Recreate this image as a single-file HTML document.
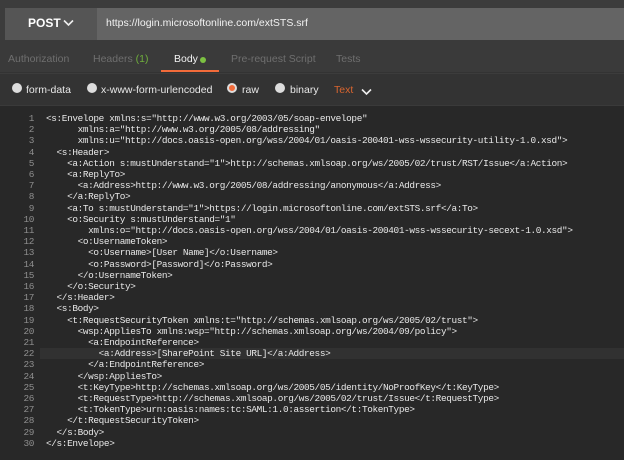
<!DOCTYPE html>
<html><head><meta charset="utf-8"><style>
*{margin:0;padding:0;box-sizing:border-box}
body{width:624px;height:460px;background:#3c3c3c;position:relative;overflow:hidden;font-family:"Liberation Sans",sans-serif}
.abs{position:absolute;white-space:nowrap}
#post{left:5px;top:8px;width:92px;height:32px;background:#555}
#url{left:97px;top:8px;width:527px;height:32px;background:#646464}
#tabs{left:0;top:40px;width:624px;height:33px;background:#3a3a3a;border-bottom:1px solid #333}
#radios{left:0;top:74px;width:624px;height:31px;background:#333}
#editor{left:0;top:105px;width:624px;height:355px;background:#282828;border-top:1px solid #3a3a3a}
.tab{font-size:10.5px;color:#6f6f6f;top:53px}
.rad{top:84px;font-size:10.5px;color:#e8e8e8}
.dot{width:10px;height:10px;border-radius:50%;background:#ddd;top:83px}
#code{position:absolute;left:0;top:113px;font-family:"Liberation Mono",monospace;font-size:9.4px;letter-spacing:-0.36px;line-height:11.2px;color:#e8e8e8}
.ln{position:absolute;left:0;width:34px;text-align:right;color:#8f8f8f}
.tx{position:absolute;left:46px;white-space:pre}
.hl{position:absolute;left:40px;width:584px;height:11.2px;background:#313131}
</style></head><body>
<div class="abs" id="post"></div>
<div class="abs" id="url"></div>
<div class="abs" style="left:28px;top:16px;font-size:12px;font-weight:bold;color:#fff">POST</div>
<svg class="abs" style="left:63px;top:19px" width="11" height="8"><path d="M1 1.5 L5.5 6 L10 1.5" stroke="#eee" stroke-width="1.6" fill="none"/></svg>
<div class="abs" style="left:106px;top:17px;font-size:10.5px;color:#f2f2f2">https://login.microsoftonline.com/extSTS.srf</div>
<div class="abs" id="tabs"></div>
<div class="abs tab" style="left:8px">Authorization</div>
<div class="abs tab" style="left:93px">Headers <span style="color:#6fae3c">(1)</span></div>
<div class="abs tab" style="left:174px;color:#f2f2f2">Body</div>
<div class="abs" style="left:200px;top:57px;width:6px;height:6px;border-radius:50%;background:#7cc142"></div>
<div class="abs tab" style="left:231px">Pre-request Script</div>
<div class="abs tab" style="left:336px">Tests</div>
<div class="abs" style="left:161px;top:70px;width:58px;height:2px;background:#f26b3a"></div>
<div class="abs" id="radios"></div>
<div class="abs dot" style="left:12px"></div>
<div class="abs rad" style="left:26px">form-data</div>
<div class="abs dot" style="left:87px"></div>
<div class="abs rad" style="left:101px">x-www-form-urlencoded</div>
<div class="abs dot" style="left:227px;background:#f26b3a;border:2px solid #ddd"></div>
<div class="abs rad" style="left:242px">raw</div>
<div class="abs dot" style="left:275px"></div>
<div class="abs rad" style="left:290px">binary</div>
<div class="abs rad" style="left:334px;color:#d9652f">Text</div>
<svg class="abs" style="left:361px;top:88px" width="11" height="8"><path d="M1 1.5 L5.5 6 L10 1.5" stroke="#eee" stroke-width="1.6" fill="none"/></svg>
<div class="abs" id="editor"></div>
<div id="code">
<div class="hl" style="top:235.2px"></div>
<div class="ln" style="top:0">1</div><div class="tx" style="top:0">&lt;s:Envelope xmlns:s="http://www.w3.org/2003/05/soap-envelope"</div>
<div class="ln" style="top:11.2px">2</div><div class="tx" style="top:11.2px">      xmlns:a="http://www.w3.org/2005/08/addressing"</div>
<div class="ln" style="top:22.4px">3</div><div class="tx" style="top:22.4px">      xmlns:u="http://docs.oasis-open.org/wss/2004/01/oasis-200401-wss-wssecurity-utility-1.0.xsd"&gt;</div>
<div class="ln" style="top:33.6px">4</div><div class="tx" style="top:33.6px">  &lt;s:Header&gt;</div>
<div class="ln" style="top:44.8px">5</div><div class="tx" style="top:44.8px">    &lt;a:Action s:mustUnderstand="1"&gt;http://schemas.xmlsoap.org/ws/2005/02/trust/RST/Issue&lt;/a:Action&gt;</div>
<div class="ln" style="top:56px">6</div><div class="tx" style="top:56px">    &lt;a:ReplyTo&gt;</div>
<div class="ln" style="top:67.2px">7</div><div class="tx" style="top:67.2px">      &lt;a:Address&gt;http://www.w3.org/2005/08/addressing/anonymous&lt;/a:Address&gt;</div>
<div class="ln" style="top:78.4px">8</div><div class="tx" style="top:78.4px">    &lt;/a:ReplyTo&gt;</div>
<div class="ln" style="top:89.6px">9</div><div class="tx" style="top:89.6px">    &lt;a:To s:mustUnderstand="1"&gt;https://login.microsoftonline.com/extSTS.srf&lt;/a:To&gt;</div>
<div class="ln" style="top:100.8px">10</div><div class="tx" style="top:100.8px">    &lt;o:Security s:mustUnderstand="1"</div>
<div class="ln" style="top:112px">11</div><div class="tx" style="top:112px">        xmlns:o="http://docs.oasis-open.org/wss/2004/01/oasis-200401-wss-wssecurity-secext-1.0.xsd"&gt;</div>
<div class="ln" style="top:123.2px">12</div><div class="tx" style="top:123.2px">      &lt;o:UsernameToken&gt;</div>
<div class="ln" style="top:134.4px">13</div><div class="tx" style="top:134.4px">        &lt;o:Username&gt;[User Name]&lt;/o:Username&gt;</div>
<div class="ln" style="top:145.6px">14</div><div class="tx" style="top:145.6px">        &lt;o:Password&gt;[Password]&lt;/o:Password&gt;</div>
<div class="ln" style="top:156.8px">15</div><div class="tx" style="top:156.8px">      &lt;/o:UsernameToken&gt;</div>
<div class="ln" style="top:168px">16</div><div class="tx" style="top:168px">    &lt;/o:Security&gt;</div>
<div class="ln" style="top:179.2px">17</div><div class="tx" style="top:179.2px">  &lt;/s:Header&gt;</div>
<div class="ln" style="top:190.4px">18</div><div class="tx" style="top:190.4px">  &lt;s:Body&gt;</div>
<div class="ln" style="top:201.6px">19</div><div class="tx" style="top:201.6px">    &lt;t:RequestSecurityToken xmlns:t="http://schemas.xmlsoap.org/ws/2005/02/trust"&gt;</div>
<div class="ln" style="top:212.8px">20</div><div class="tx" style="top:212.8px">      &lt;wsp:AppliesTo xmlns:wsp="http://schemas.xmlsoap.org/ws/2004/09/policy"&gt;</div>
<div class="ln" style="top:224px">21</div><div class="tx" style="top:224px">        &lt;a:EndpointReference&gt;</div>
<div class="ln" style="top:235.2px">22</div><div class="tx" style="top:235.2px">          &lt;a:Address&gt;[SharePoint Site URL]&lt;/a:Address&gt;</div>
<div class="ln" style="top:246.4px">23</div><div class="tx" style="top:246.4px">        &lt;/a:EndpointReference&gt;</div>
<div class="ln" style="top:257.6px">24</div><div class="tx" style="top:257.6px">      &lt;/wsp:AppliesTo&gt;</div>
<div class="ln" style="top:268.8px">25</div><div class="tx" style="top:268.8px">      &lt;t:KeyType&gt;http://schemas.xmlsoap.org/ws/2005/05/identity/NoProofKey&lt;/t:KeyType&gt;</div>
<div class="ln" style="top:280px">26</div><div class="tx" style="top:280px">      &lt;t:RequestType&gt;http://schemas.xmlsoap.org/ws/2005/02/trust/Issue&lt;/t:RequestType&gt;</div>
<div class="ln" style="top:291.2px">27</div><div class="tx" style="top:291.2px">      &lt;t:TokenType&gt;urn:oasis:names:tc:SAML:1.0:assertion&lt;/t:TokenType&gt;</div>
<div class="ln" style="top:302.4px">28</div><div class="tx" style="top:302.4px">    &lt;/t:RequestSecurityToken&gt;</div>
<div class="ln" style="top:313.6px">29</div><div class="tx" style="top:313.6px">  &lt;/s:Body&gt;</div>
<div class="ln" style="top:324.8px">30</div><div class="tx" style="top:324.8px">&lt;/s:Envelope&gt;</div>
</div>
</body></html>
